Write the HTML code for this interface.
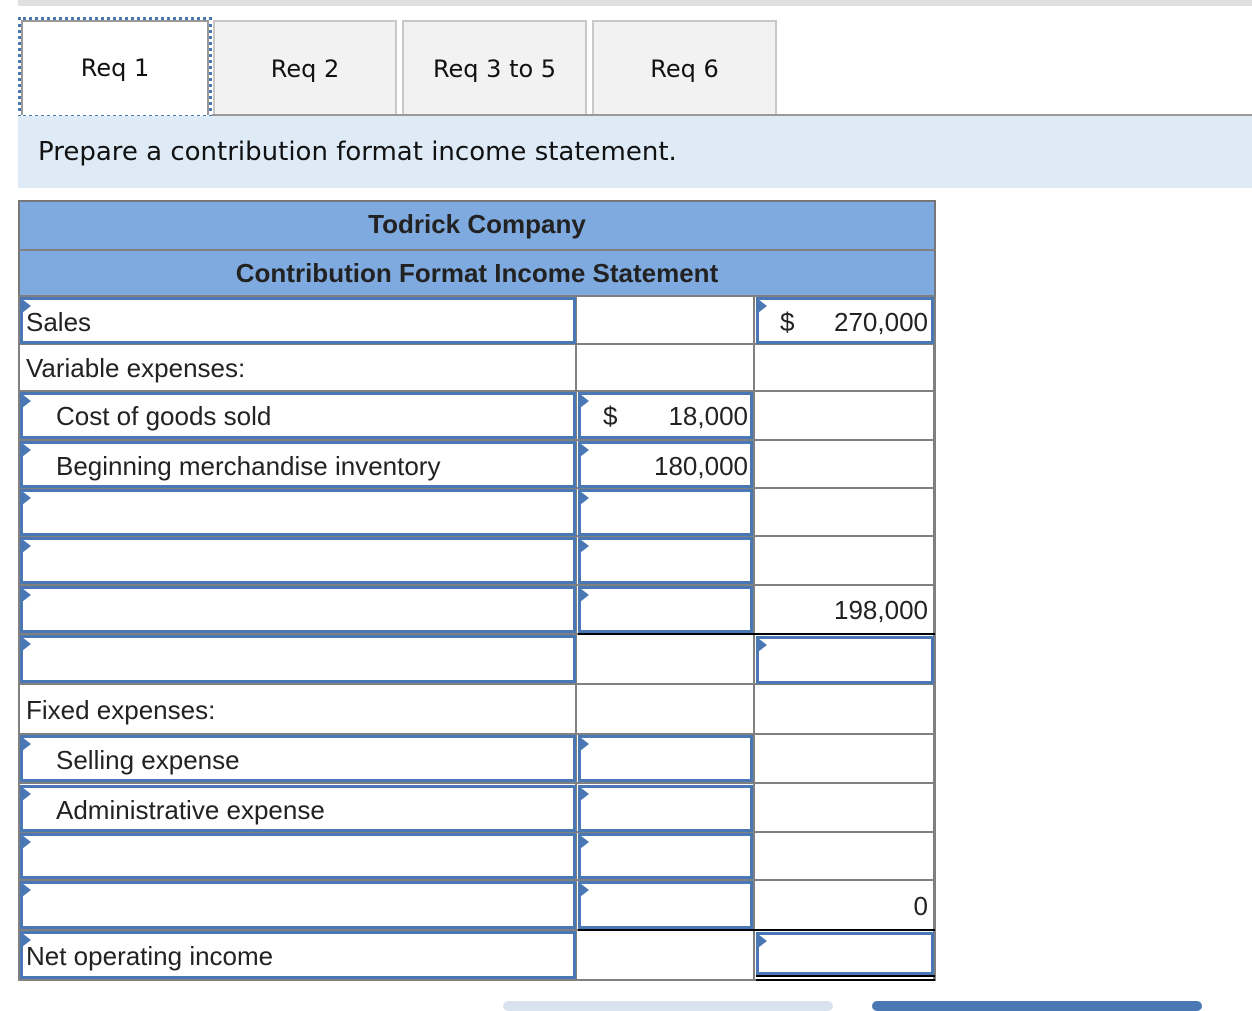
<!DOCTYPE html>
<html><head><meta charset="utf-8">
<style>
*{margin:0;padding:0;box-sizing:border-box}
body{width:1252px;height:1006px;background:#fff;position:relative;overflow:hidden;font-family:"Liberation Sans",Arial,sans-serif;color:#222}
.a{position:absolute}
.tab{position:absolute;top:20px;height:95px;background:#f2f2f2;border:2px solid #c8c8c8;border-bottom:none;font-family:"DejaVu Sans",Verdana,sans-serif;font-size:24px;display:flex;align-items:center;justify-content:center;color:#111}
.gl{position:absolute;background:#808080}
.in{position:absolute;border:3px solid #4a78b5;background:#fff}
.in::before{content:"";position:absolute;left:-1px;top:-1px;border-left:9px solid #4a78b5;border-top:7px solid transparent;border-bottom:7px solid transparent}
.t{position:absolute;font-size:26px;color:#222;line-height:1}
.r{text-align:right}
.k{position:absolute;background:#000}
</style></head><body>
<div class="a" style="left:18px;top:0;width:1234px;height:6px;background:#e0e0e0"></div>
<div class="tab" style="left:18px;width:194px;background:#fff;border:3px dotted #4a78b5;top:17px;height:101px"><div style="position:absolute;inset:0;border:2px solid #999;border-bottom:none"></div>Req 1</div>
<div class="tab" style="left:213px;width:184px">Req 2</div>
<div class="tab" style="left:402px;width:185px">Req 3 to 5</div>
<div class="tab" style="left:592px;width:185px">Req 6</div>
<div class="a" style="left:212px;top:114px;width:1040px;height:2px;background:#999"></div>
<div class="a" style="left:18px;top:116px;width:1234px;height:72px;background:#deebf7"></div>
<div class="a" style="left:38px;top:137px;font-family:'DejaVu Sans',Verdana,sans-serif;font-size:26px;color:#111">Prepare a contribution format income statement.</div>

<!-- header -->
<div class="a" style="left:18px;top:200px;width:918px;height:97px;background:#7faadf;border:2px solid #777"></div>
<div class="gl" style="left:18px;top:249px;width:918px;height:2px"></div>
<div class="a" style="left:18px;top:209px;width:918px;text-align:center;font-weight:bold;font-size:26px;color:#222">Todrick Company</div>
<div class="a" style="left:18px;top:258px;width:918px;text-align:center;font-weight:bold;font-size:26px;color:#222">Contribution Format Income Statement</div>

<!-- grid -->
<div class="gl" style="left:18px;top:296px;width:2px;height:685px"></div>
<div class="gl" style="left:575px;top:296px;width:2px;height:685px"></div>
<div class="gl" style="left:753px;top:296px;width:2px;height:685px"></div>
<div class="gl" style="left:933px;top:296px;width:3px;height:685px"></div>
<div class="gl" style="left:18px;top:295px;width:918px;height:2px"></div>
<div class="gl" style="left:18px;top:343px;width:918px;height:2px"></div>
<div class="gl" style="left:18px;top:390px;width:918px;height:2px"></div>
<div class="gl" style="left:18px;top:439px;width:918px;height:2px"></div>
<div class="gl" style="left:18px;top:487px;width:918px;height:2px"></div>
<div class="gl" style="left:18px;top:535px;width:918px;height:2px"></div>
<div class="gl" style="left:18px;top:584px;width:918px;height:2px"></div>
<div class="gl" style="left:18px;top:633px;width:918px;height:2px"></div>
<div class="gl" style="left:18px;top:683px;width:918px;height:2px"></div>
<div class="gl" style="left:18px;top:733px;width:918px;height:2px"></div>
<div class="gl" style="left:18px;top:782px;width:918px;height:2px"></div>
<div class="gl" style="left:18px;top:831px;width:918px;height:2px"></div>
<div class="gl" style="left:18px;top:879px;width:918px;height:2px"></div>
<div class="gl" style="left:18px;top:929px;width:918px;height:2px"></div>
<div class="gl" style="left:18px;top:979px;width:918px;height:2px"></div>

<!-- col1 inputs -->
<div class="in" style="left:20px;top:297px;width:556px;height:47px"></div>
<div class="in" style="left:20px;top:392px;width:556px;height:47px"></div>
<div class="in" style="left:20px;top:441px;width:556px;height:47px"></div>
<div class="in" style="left:20px;top:489px;width:556px;height:47px"></div>
<div class="in" style="left:20px;top:537px;width:556px;height:47px"></div>
<div class="in" style="left:20px;top:586px;width:556px;height:47px"></div>
<div class="in" style="left:20px;top:635px;width:556px;height:48px"></div>
<div class="in" style="left:20px;top:735px;width:556px;height:47px"></div>
<div class="in" style="left:20px;top:785px;width:556px;height:47px"></div>
<div class="in" style="left:20px;top:833px;width:556px;height:46px"></div>
<div class="in" style="left:20px;top:881px;width:556px;height:48px"></div>
<div class="in" style="left:20px;top:931px;width:556px;height:48px"></div>
<!-- col2 inputs -->
<div class="in" style="left:578px;top:392px;width:175px;height:47px"></div>
<div class="in" style="left:578px;top:441px;width:175px;height:47px"></div>
<div class="in" style="left:578px;top:489px;width:175px;height:47px"></div>
<div class="in" style="left:578px;top:537px;width:175px;height:47px"></div>
<div class="in" style="left:578px;top:586px;width:175px;height:47px"></div>
<div class="in" style="left:578px;top:735px;width:175px;height:47px"></div>
<div class="in" style="left:578px;top:785px;width:175px;height:47px"></div>
<div class="in" style="left:578px;top:833px;width:175px;height:46px"></div>
<div class="in" style="left:578px;top:881px;width:175px;height:48px"></div>
<!-- col3 inputs -->
<div class="in" style="left:756px;top:297px;width:178px;height:47px"></div>
<div class="in" style="left:756px;top:636px;width:178px;height:48px"></div>
<div class="in" style="left:756px;top:932px;width:178px;height:43px"></div>
<!-- black rules -->
<div class="k" style="left:578px;top:633px;width:357px;height:2px"></div>
<div class="k" style="left:578px;top:929px;width:357px;height:2px"></div>
<div class="k" style="left:756px;top:975px;width:179px;height:2px"></div>
<div class="k" style="left:756px;top:979px;width:179px;height:2px"></div>

<!-- text -->
<div class="t" style="left:26px;top:309px">Sales</div>
<div class="t" style="left:26px;top:355px">Variable expenses:</div>
<div class="t" style="left:56px;top:403px">Cost of goods sold</div>
<div class="t" style="left:56px;top:453px">Beginning merchandise inventory</div>
<div class="t" style="left:26px;top:697px">Fixed expenses:</div>
<div class="t" style="left:56px;top:747px">Selling expense</div>
<div class="t" style="left:56px;top:797px">Administrative expense</div>
<div class="t" style="left:26px;top:943px">Net operating income</div>
<div class="t" style="left:780px;top:309px">$</div>
<div class="t r" style="left:780px;top:309px;width:148px">270,000</div>
<div class="t" style="left:603px;top:403px">$</div>
<div class="t r" style="left:600px;top:403px;width:148px">18,000</div>
<div class="t r" style="left:600px;top:453px;width:148px">180,000</div>
<div class="t r" style="left:780px;top:597px;width:148px">198,000</div>
<div class="t r" style="left:780px;top:893px;width:148px">0</div>

<!-- bottom buttons -->
<div class="a" style="left:503px;top:1001px;width:330px;height:10px;background:#d9e3ef;border-radius:5px"></div>
<div class="a" style="left:872px;top:1001px;width:330px;height:10px;background:#4a78b5;border-radius:5px"></div>
</body></html>
